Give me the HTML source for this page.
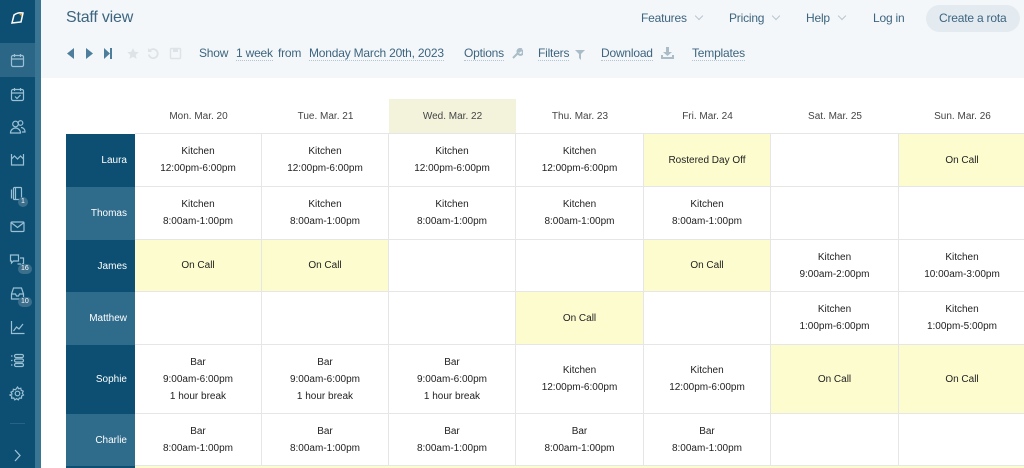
<!DOCTYPE html>
<html><head><meta charset="utf-8"><style>
*{margin:0;padding:0;box-sizing:border-box}
body{width:1024px;height:468px;overflow:hidden;background:#fff;font-family:"Liberation Sans",Arial,sans-serif;position:relative}
.sb{position:absolute;left:0;top:0;width:35px;height:468px;background:#0c4f72}
.sc{position:absolute;left:35px;top:0;width:6px;height:468px;background:#3a7594}
.act{position:absolute;left:0;top:43px;width:35px;height:34px;background:#2c6686}
.ic{position:absolute;left:9px;width:17px;height:17px}
.bd{position:absolute;left:18px;background:#3c6f8c;color:#fff;font-size:7px;border-radius:6px;padding:1px 3px;line-height:8px}
.hd{position:absolute;left:41px;top:0;width:983px;height:78px;background:#f4f7f9}
.t{position:absolute;color:#3d6580;font-size:12px;white-space:nowrap;letter-spacing:-0.2px}
.u{border-bottom:1px dotted #b5c5d0}
.chev{display:inline-block;width:6px;height:6px;border-right:1px solid #b8c6cf;border-bottom:1px solid #b8c6cf;transform:rotate(45deg);margin-left:9px;position:relative;top:-3px}
.c{position:absolute;display:flex;flex-direction:column;justify-content:center;align-items:center;font-size:10px;color:#222;line-height:17px;text-align:center;border-right:1px solid #e6e6e6;border-bottom:1px solid #e6e6e6}
.y{background:#fdfccf}
.n{position:absolute;left:66px;width:69px;display:flex;align-items:center;justify-content:flex-end;padding-right:8px;color:#fff;font-size:10px}
.d{background:#0c4f72}.l{background:#2f6b8b}
.h{position:absolute;top:99px;height:35px;display:flex;align-items:center;justify-content:center;font-size:10px;color:#444}
</style></head><body>
<div class="sb"></div><div class="sc"></div><div class="act"></div>
<svg class="ic" style="top:10px" viewBox="0 0 17 17"><path d="M3 13 L5 5 Q9 2 14 3 L12 12 Z" fill="none" stroke="#fff" stroke-width="1.5"/><path d="M10 4 L13 3.5 L12.5 6 Z" fill="#f39a1e"/></svg>
<svg class="ic" style="top:52px" viewBox="0 0 17 17" fill="none" stroke="#9cc0d4" stroke-width="1.2"><rect x="2.5" y="3.5" width="12" height="11" rx="1.5"/><path d="M2.5 7h12M5.5 2v3M11.5 2v3"/></svg>
<svg class="ic" style="top:86px" viewBox="0 0 17 17" fill="none" stroke="#9cc0d4" stroke-width="1.2"><rect x="2.5" y="3.5" width="12" height="11" rx="1.5"/><path d="M2.5 7h12M5.5 2v3M11.5 2v3M6 10.5l2 2 3.5-3.5"/></svg>
<svg class="ic" style="top:118px" viewBox="0 0 17 17" fill="none" stroke="#9cc0d4" stroke-width="1.2"><circle cx="6.5" cy="6" r="2.8"/><path d="M1.5 15c0-3 2.5-5 5-5s5 2 5 5z"/><circle cx="11.5" cy="5" r="2.3"/><path d="M12 9.5c2 0 4 1.5 4 4.5h-3"/></svg>
<svg class="ic" style="top:151px" viewBox="0 0 17 17" fill="none" stroke="#9cc0d4" stroke-width="1.2"><path d="M2.5 3v11h12V3M2.5 8l3-3 3 3 3-3 3 3"/></svg>
<svg class="ic" style="top:185px" viewBox="0 0 17 17" fill="none" stroke="#9cc0d4" stroke-width="1.2"><rect x="4.5" y="2.5" width="8" height="12" rx="1"/><path d="M2.5 4.5v9M6.5 2.5v12"/></svg><div class="bd" style="top:197px">1</div>
<svg class="ic" style="top:218px" viewBox="0 0 17 17" fill="none" stroke="#9cc0d4" stroke-width="1.2"><rect x="2" y="4" width="13" height="9.5" rx="1"/><path d="M2 4.5l6.5 5 6.5-5"/></svg>
<svg class="ic" style="top:252px" viewBox="0 0 17 17" fill="none" stroke="#9cc0d4" stroke-width="1.2"><path d="M1.5 3h8v6h-5l-2 2v-2h-1z M11 6h3.5v6h-1v2l-2-2h-3"/></svg><div class="bd" style="top:264px">16</div>
<svg class="ic" style="top:285px" viewBox="0 0 17 17" fill="none" stroke="#9cc0d4" stroke-width="1.2"><path d="M2.5 9l2-6h8l2 6v5h-12zM2.5 9h4l1 2h2l1-2h4"/></svg><div class="bd" style="top:297px">10</div>
<svg class="ic" style="top:319px" viewBox="0 0 17 17" fill="none" stroke="#9cc0d4" stroke-width="1.2"><path d="M2.5 2v12.5h13M4.5 12l3-4 2.5 2 4-5"/></svg>
<svg class="ic" style="top:352px" viewBox="0 0 17 17" fill="none" stroke="#9cc0d4" stroke-width="1.2"><rect x="5.5" y="2.5" width="9" height="3" rx="1.5"/><rect x="5.5" y="7" width="9" height="3" rx="1.5"/><rect x="5.5" y="11.5" width="9" height="3" rx="1.5"/><path d="M2 4h1.5M2 8.5h1.5M2 13h1.5"/></svg>
<svg class="ic" style="top:385px" viewBox="0 0 17 17" fill="none" stroke="#9cc0d4" stroke-width="1.2"><circle cx="8.5" cy="8.5" r="2.3"/><path d="M8.5 2l1.2 1.8 2.1-.6.4 2.1 2 .9-.9 2 1.2 1.8-1.9 1-.1 2.2-2.1-.2-1.1 1.9-1.7-1.3-1.8 1.3-1-1.9-2.2.2.1-2.2-1.9-1L3 9 2 7.2l2-.9.4-2.1 2.1.6z"/></svg>
<div style="position:absolute;left:10px;top:423px;width:15px;height:1px;background:#2a6283"></div>
<svg class="ic" style="top:447px" viewBox="0 0 17 17" fill="none" stroke="#9cc0d4" stroke-width="1.3"><path d="M6 3l5 5.5-5 5.5"/></svg>

<div class="hd"></div>
<div class="t" style="left:66px;top:9px;font-size:16px">Staff view</div>
<div class="t" style="left:641px;top:11px">Features<span class="chev"></span></div>
<div class="t" style="left:729px;top:11px">Pricing<span class="chev"></span></div>
<div class="t" style="left:806px;top:11px">Help<span class="chev"></span></div>
<div class="t" style="left:873px;top:11px">Log in</div>
<div style="position:absolute;left:926px;top:5px;width:94px;height:27px;border-radius:14px;background:#e3ebf0"></div>
<div class="t" style="left:939px;top:11px">Create a rota</div>
<svg style="position:absolute;left:66px;top:47px" width="120" height="14" viewBox="0 0 120 14"><path d="M8 1v11L1 6.5z" fill="#4d7f9c"/><path d="M20 1v11l7-5.5z" fill="#4d7f9c"/><path d="M38 1v11l6-5.5z M44 1h2v11h-2z" fill="#4d7f9c"/><path d="M67 1l1.7 3.8 4.1.4-3.1 2.7.9 4-3.6-2.1-3.6 2.1.9-4-3.1-2.7 4.1-.4z" fill="#dde3e7"/><path d="M84 3.5a4.5 4.5 0 1 1-1.2 4" fill="none" stroke="#dde3e7" stroke-width="1.8"/><path d="M82 1v4h4z" fill="#dde3e7"/><rect x="104.5" y="1.5" width="10" height="10" rx="1" fill="none" stroke="#dde3e7" stroke-width="1.5"/><rect x="107" y="2" width="5" height="3" fill="#dde3e7"/></svg>
<div class="t" style="left:199px;top:46px">Show</div>
<div class="t u" style="left:236px;top:46px">1 week</div>
<div class="t" style="left:278px;top:46px">from</div>
<div class="t u" style="left:309px;top:46px">Monday March 20th, 2023</div>
<div class="t u" style="left:464px;top:46px">Options</div>
<svg style="position:absolute;left:512px;top:48px" width="11" height="11" viewBox="0 0 11 11"><path d="M1 10l5-5M6 5a2.5 2.5 0 1 0 3-3l-1.5 1.5-1-1L8 1a2.5 2.5 0 0 0-2 4" stroke="#a9bcc7" stroke-width="2" fill="none"/></svg>
<div class="t u" style="left:538px;top:46px">Filters</div>
<svg style="position:absolute;left:575px;top:50px" width="10" height="10" viewBox="0 0 10 10"><path d="M0 0h10L6 4v6L4 8V4z" fill="#a9bcc7"/></svg>
<div class="t u" style="left:601px;top:46px">Download</div>
<svg style="position:absolute;left:661px;top:47px" width="13" height="12" viewBox="0 0 13 12"><path d="M5 0h3v5h3L6.5 9 2 5h3z M0 8h2v2h9V8h2v4H0z" fill="#a9bcc7"/></svg>
<div class="t u" style="left:692px;top:46px">Templates</div>

<div class="h" style="left:135px;width:127px">Mon. Mar. 20</div>
<div class="h" style="left:262px;width:127px">Tue. Mar. 21</div>
<div class="h" style="left:389px;width:127px;background:#f3f3dc">Wed. Mar. 22</div>
<div class="h" style="left:516px;width:128px">Thu. Mar. 23</div>
<div class="h" style="left:644px;width:127px">Fri. Mar. 24</div>
<div class="h" style="left:771px;width:128px">Sat. Mar. 25</div>
<div class="h" style="left:899px;width:127px">Sun. Mar. 26</div>
<div style="position:absolute;left:135px;top:133px;width:889px;height:1px;background:#e6e6e6"></div>

<div class="n d" style="top:134px;height:53px">Laura</div>
<div class="n l" style="top:187px;height:53px">Thomas</div>
<div class="n d" style="top:240px;height:52px">James</div>
<div class="n l" style="top:292px;height:53px">Matthew</div>
<div class="n d" style="top:345px;height:69px">Sophie</div>
<div class="n l" style="top:414px;height:52px">Charlie</div>
<div style="position:absolute;left:66px;top:466px;width:69px;height:2px;background:#0c4f72"></div>
<div style="position:absolute;left:135px;top:466px;width:889px;height:2px;background:#fdfccf"></div>

<div class="c" style="left:135px;top:134px;width:127px;height:53px">Kitchen<br>12:00pm-6:00pm</div>
<div class="c" style="left:262px;top:134px;width:127px;height:53px">Kitchen<br>12:00pm-6:00pm</div>
<div class="c" style="left:389px;top:134px;width:127px;height:53px">Kitchen<br>12:00pm-6:00pm</div>
<div class="c" style="left:516px;top:134px;width:128px;height:53px">Kitchen<br>12:00pm-6:00pm</div>
<div class="c y" style="left:644px;top:134px;width:127px;height:53px">Rostered Day Off</div>
<div class="c" style="left:771px;top:134px;width:128px;height:53px"></div>
<div class="c y" style="left:899px;top:134px;width:127px;height:53px">On Call</div>
<div class="c" style="left:135px;top:187px;width:127px;height:53px">Kitchen<br>8:00am-1:00pm</div>
<div class="c" style="left:262px;top:187px;width:127px;height:53px">Kitchen<br>8:00am-1:00pm</div>
<div class="c" style="left:389px;top:187px;width:127px;height:53px">Kitchen<br>8:00am-1:00pm</div>
<div class="c" style="left:516px;top:187px;width:128px;height:53px">Kitchen<br>8:00am-1:00pm</div>
<div class="c" style="left:644px;top:187px;width:127px;height:53px">Kitchen<br>8:00am-1:00pm</div>
<div class="c" style="left:771px;top:187px;width:128px;height:53px"></div>
<div class="c" style="left:899px;top:187px;width:127px;height:53px"></div>
<div class="c y" style="left:135px;top:240px;width:127px;height:52px">On Call</div>
<div class="c y" style="left:262px;top:240px;width:127px;height:52px">On Call</div>
<div class="c" style="left:389px;top:240px;width:127px;height:52px"></div>
<div class="c" style="left:516px;top:240px;width:128px;height:52px"></div>
<div class="c y" style="left:644px;top:240px;width:127px;height:52px">On Call</div>
<div class="c" style="left:771px;top:240px;width:128px;height:52px">Kitchen<br>9:00am-2:00pm</div>
<div class="c" style="left:899px;top:240px;width:127px;height:52px">Kitchen<br>10:00am-3:00pm</div>
<div class="c" style="left:135px;top:292px;width:127px;height:53px"></div>
<div class="c" style="left:262px;top:292px;width:127px;height:53px"></div>
<div class="c" style="left:389px;top:292px;width:127px;height:53px"></div>
<div class="c y" style="left:516px;top:292px;width:128px;height:53px">On Call</div>
<div class="c" style="left:644px;top:292px;width:127px;height:53px"></div>
<div class="c" style="left:771px;top:292px;width:128px;height:53px">Kitchen<br>1:00pm-6:00pm</div>
<div class="c" style="left:899px;top:292px;width:127px;height:53px">Kitchen<br>1:00pm-5:00pm</div>
<div class="c" style="left:135px;top:345px;width:127px;height:69px">Bar<br>9:00am-6:00pm<br>1 hour break</div>
<div class="c" style="left:262px;top:345px;width:127px;height:69px">Bar<br>9:00am-6:00pm<br>1 hour break</div>
<div class="c" style="left:389px;top:345px;width:127px;height:69px">Bar<br>9:00am-6:00pm<br>1 hour break</div>
<div class="c" style="left:516px;top:345px;width:128px;height:69px">Kitchen<br>12:00pm-6:00pm</div>
<div class="c" style="left:644px;top:345px;width:127px;height:69px">Kitchen<br>12:00pm-6:00pm</div>
<div class="c y" style="left:771px;top:345px;width:128px;height:69px">On Call</div>
<div class="c y" style="left:899px;top:345px;width:127px;height:69px">On Call</div>
<div class="c" style="left:135px;top:414px;width:127px;height:52px">Bar<br>8:00am-1:00pm</div>
<div class="c" style="left:262px;top:414px;width:127px;height:52px">Bar<br>8:00am-1:00pm</div>
<div class="c" style="left:389px;top:414px;width:127px;height:52px">Bar<br>8:00am-1:00pm</div>
<div class="c" style="left:516px;top:414px;width:128px;height:52px">Bar<br>8:00am-1:00pm</div>
<div class="c" style="left:644px;top:414px;width:127px;height:52px">Bar<br>8:00am-1:00pm</div>
<div class="c" style="left:771px;top:414px;width:128px;height:52px"></div>
<div class="c" style="left:899px;top:414px;width:127px;height:52px"></div>
</body></html>
